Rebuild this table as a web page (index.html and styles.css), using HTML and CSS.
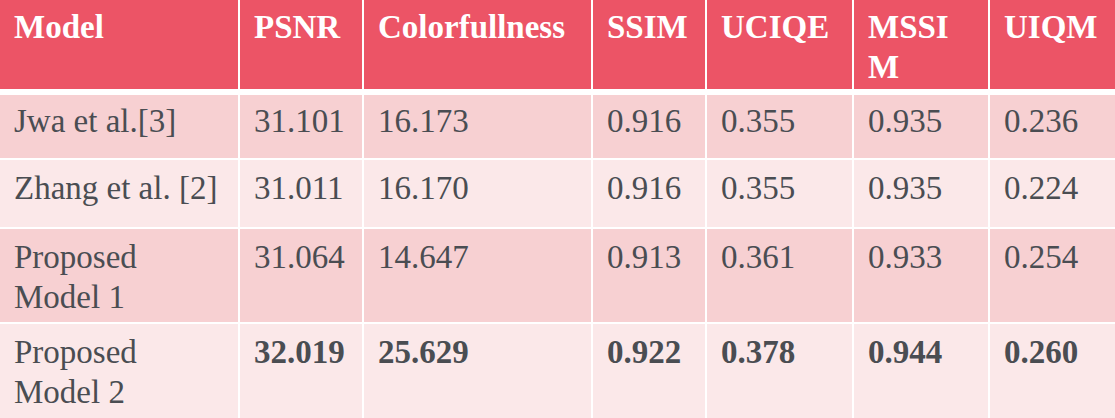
FILE: index.html
```html
<!DOCTYPE html>
<html lang="en">
<head>
    <meta charset="UTF-8">
    <meta name="viewport" content="width=device-width, initial-scale=1.0">
    <title>Model Comparison</title>
    <link rel="stylesheet" href="styles.css">
</head>
<body>
    <table class="results">
        <thead>
            <tr class="results-head">
                <th class="col-model">Model</th>
                <th class="col-psnr">PSNR</th>
                <th class="col-color">Colorfullness</th>
                <th class="col-ssim">SSIM</th>
                <th class="col-uciqe">UCIQE</th>
                <th class="col-mssim">MSSI<br>M</th>
                <th class="col-uiqm">UIQM</th>
            </tr>
        </thead>
        <tbody>
            <tr class="row-a row-first">
                <td>Jwa et al.[3]</td>
                <td>31.101</td>
                <td>16.173</td>
                <td>0.916</td>
                <td>0.355</td>
                <td>0.935</td>
                <td>0.236</td>
            </tr>
            <tr class="row-b row-short">
                <td>Zhang et al. [2]</td>
                <td>31.011</td>
                <td>16.170</td>
                <td>0.916</td>
                <td>0.355</td>
                <td>0.935</td>
                <td>0.224</td>
            </tr>
            <tr class="row-a row-tall">
                <td>Proposed Model 1</td>
                <td>31.064</td>
                <td>14.647</td>
                <td>0.913</td>
                <td>0.361</td>
                <td>0.933</td>
                <td>0.254</td>
            </tr>
            <tr class="row-b row-last">
                <td>Proposed Model 2</td>
                <td class="best">32.019</td>
                <td class="best">25.629</td>
                <td class="best">0.922</td>
                <td class="best">0.378</td>
                <td class="best">0.944</td>
                <td class="best">0.260</td>
            </tr>
        </tbody>
    </table>
</body>
</html>
```

FILE: styles.css
```css
body {
    margin: 0;
    background-color: #ffffff;
}

.results {
    width: 1115px;
    table-layout: fixed;
    border-collapse: separate;
    border-spacing: 0;
    font-family: "Liberation Serif", "Times New Roman", serif;
    font-size: 33px;
    line-height: 40px;
}

.results th,
.results td {
    box-sizing: border-box;
    vertical-align: top;
    text-align: left;
    padding: 8px 8px 0 14px;
    border-right: 2px solid #ffffff;
    border-bottom: 2px solid #ffffff;
}

.results th:last-child,
.results td:last-child {
    border-right: none;
}

.results-head {
    height: 95px;
}

.results th {
    background-color: #ec5466;
    color: #ffffff;
    font-weight: bold;
    padding-top: 7px;
    border-bottom-width: 6px;
}

.col-model { width: 240px; }
.col-psnr { width: 124px; }
.col-color { width: 229px; }
.col-ssim { width: 114px; }
.col-uciqe { width: 147px; }
.col-mssim { width: 136px; }
.col-uiqm { width: 125px; }

.results td {
    color: #4a4d52;
}

.row-a td {
    background-color: #f7d0d2;
}

.row-b td {
    background-color: #fbe8e9;
}

.row-first {
    height: 65px;
}

.row-first td {
    padding-top: 6px;
}

.row-short {
    height: 69px;
}

.row-tall {
    height: 95px;
}

.row-last {
    height: 94px;
}

.row-last td {
    border-bottom: none;
}

.results td.best {
    font-weight: bold;
}
```
